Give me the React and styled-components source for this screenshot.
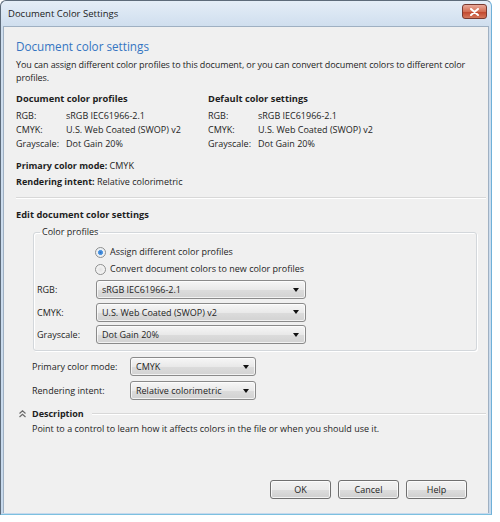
import React, { useState } from "react";
import styled, { createGlobalStyle } from "styled-components";

const GlobalStyle = createGlobalStyle`
    html, body {
        margin: 0;
        padding: 0;
        background: #ffffff;
    }
    body {
        font-family: "Open Sans", "Noto Sans", sans-serif;
        font-size: 9px;
        color: #1e1e1e;
    }
`

const profiles = [
    { label: "RGB:", value: "sRGB IEC61966-2.1" },
    { label: "CMYK:", value: "U.S. Web Coated (SWOP) v2" },
    { label: "Grayscale:", value: "Dot Gain 20%" },
]

const Chevron = () => (
    <svg width="7" height="8" viewBox="0 0 7 8">
        <path d="M0.5 3.5 L3.5 0.8 L6.5 3.5" fill="none" stroke="#6a6a6a" strokeWidth="1.2" />
        <path d="M0.5 7 L3.5 4.3 L6.5 7" fill="none" stroke="#6a6a6a" strokeWidth="1.2" />
    </svg>
)

const Combo = ({ value, width }) => (
    <Select width={width}>
        <span>{value}</span>
        <Arrow />
    </Select>
)

const App = () => {
    const [mode, setMode] = useState("assign")

    return (
        <>
            <GlobalStyle />
            <Window>
                <TitleBar>
                    <Caption>Document Color Settings</Caption>
                    <Close>
                        <svg width="9" height="8" viewBox="0 0 9 8">
                            <path d="M1 1 L8 7 M8 1 L1 7" stroke="#ffffff" strokeWidth="2" strokeLinecap="round" />
                        </svg>
                    </Close>
                </TitleBar>

                <Content>
                    <Heading>Document color settings</Heading>
                    <Intro>
                        You can assign different color profiles to this document, or you can convert document colors to different color profiles.
                    </Intro>

                    <Columns>
                        <Column>
                            <SubTitle>Document color profiles</SubTitle>
                            {profiles.map(p => (
                                <InfoRow key={p.label}>
                                    <InfoLabel>{p.label}</InfoLabel>
                                    <span>{p.value}</span>
                                </InfoRow>
                            ))}
                        </Column>
                        <Column>
                            <SubTitle>Default color settings</SubTitle>
                            {profiles.map(p => (
                                <InfoRow key={p.label}>
                                    <InfoLabel>{p.label}</InfoLabel>
                                    <span>{p.value}</span>
                                </InfoRow>
                            ))}
                        </Column>
                    </Columns>

                    <Summary>
                        <div><b>Primary color mode:</b> CMYK</div>
                        <div><b>Rendering intent:</b> Relative colorimetric</div>
                    </Summary>

                    <Separator />

                    <SubTitle>Edit document color settings</SubTitle>

                    <Group>
                        <Legend>Color profiles</Legend>
                        <Radios>
                            <RadioRow onClick={() => setMode("assign")}>
                                <Radio checked={mode === "assign"} />
                                Assign different color profiles
                            </RadioRow>
                            <RadioRow onClick={() => setMode("convert")}>
                                <Radio checked={mode === "convert"} />
                                Convert document colors to new color profiles
                            </RadioRow>
                        </Radios>
                        <Fields>
                            {profiles.map(p => (
                                <FieldRow key={p.label}>
                                    <FieldLabel>{p.label}</FieldLabel>
                                    <Combo value={p.value} width={210} />
                                </FieldRow>
                            ))}
                        </Fields>
                    </Group>

                    <Options>
                        <OptionRow>
                            <OptionLabel>Primary color mode:</OptionLabel>
                            <Combo value="CMYK" width={126} />
                        </OptionRow>
                        <OptionRow>
                            <OptionLabel>Rendering intent:</OptionLabel>
                            <Combo value="Relative colorimetric" width={126} />
                        </OptionRow>
                    </Options>

                    <DescHeader>
                        <Chevron />
                        <b>Description</b>
                        <Rule />
                    </DescHeader>
                    <DescText>Point to a control to learn how it affects colors in the file or when you should use it.</DescText>

                    <Buttons>
                        <Button>OK</Button>
                        <Button>Cancel</Button>
                        <Button>Help</Button>
                    </Buttons>
                </Content>
            </Window>
        </>
    )
}

const Window = styled.div`
    box-sizing: border-box;
    width: 492px;
    height: 515px;
    display: flex;
    flex-direction: column;
    border: 1px solid #5d6b7a;
    border-right-color: #6fb0d8;
    border-bottom-color: #7cc0e0;
    border-radius: 6px 6px 0 0;
    padding: 0 2px 1px 2px;
    background: linear-gradient(#e4edf7, #cfdeee 26px, #c7d9ec);
`
const TitleBar = styled.div`
    height: 25px;
    display: flex;
    align-items: center;
    justify-content: space-between;
    padding-left: 5px;
    padding-right: 2px;
`
const Caption = styled.div`
    font-size: 9.5px;
    color: #1b1b1b;
`
const Close = styled.div`
    width: 25px;
    height: 15px;
    margin-top: -4px;
    display: flex;
    align-items: center;
    justify-content: center;
    border: 1px solid #7a3a30;
    border-radius: 3px;
    background: linear-gradient(#e9a99a, #d46f55 50%, #c0442b 51%, #d5785c);
    box-sizing: border-box;
`
const Content = styled.div`
    flex: 1;
    display: flex;
    flex-direction: column;
    background: #f0f0f0;
    border: 1px solid #9fb0c2;
    border-bottom: none;
    padding: 10px 12px 14px 12px;
`
const Heading = styled.div`
    font-size: 11.7px;
    line-height: 18px;
    color: #3575c2;
`
const Intro = styled.div`
    margin-top: 4px;
    line-height: 12.5px;
    letter-spacing: -0.1px;
    margin-right: -6px;
`
const Columns = styled.div`
    display: flex;
    margin-top: 8px;
`
const Column = styled.div`
    width: 192px;
`
const SubTitle = styled.div`
    font-weight: 700;
    font-size: 9.3px;
    line-height: 14px;
    margin-bottom: 3px;
`
const InfoRow = styled.div`
    display: flex;
    line-height: 14px;
`
const InfoLabel = styled.span`
    width: 50px;
`
const Summary = styled.div`
    margin-top: 7px;
    line-height: 15px;
    display: flex;
    flex-direction: column;
    gap: 1px;
`
const Separator = styled.div`
    height: 1px;
    background: #d8d8d8;
    border-bottom: 1px solid #ffffff;
    margin: 8px -10px 9px 0;
`
const Group = styled.fieldset`
    margin: 1px 0 0 17px;
    width: 444px;
    box-sizing: border-box;
    border: 1px solid #d3d7db;
    border-radius: 3px;
    box-shadow: inset 1px 1px 0 #ffffff, 1px 1px 0 #ffffff;
    padding: 8px 0 6px 3px;
`
const Legend = styled.legend`
    padding: 0 2px;
    margin-left: 3px;
    line-height: 12px;
`
const Radios = styled.div`
    display: flex;
    flex-direction: column;
    padding-left: 58px;
    gap: 5px;
`
const RadioRow = styled.label`
    display: flex;
    align-items: center;
    gap: 4px;
    line-height: 12px;
    cursor: default;
`
const Radio = styled.span`
    width: 9px;
    height: 9px;
    border-radius: 50%;
    border: 1px solid #8e8f8f;
    background: ${props => props.checked
        ? "radial-gradient(circle, #2e6fc4 0, #5aa0e6 2.3px, #e8eef4 2.6px, #f4f4f4 100%)"
        : "radial-gradient(circle, #e3e3e3 0, #fdfdfd 100%)"};
`
const Fields = styled.div`
    margin-top: 5px;
    display: flex;
    flex-direction: column;
    gap: 3.5px;
`
const FieldRow = styled.div`
    display: flex;
    align-items: center;
`
const FieldLabel = styled.span`
    width: 59px;
`
const Select = styled.div`
    box-sizing: border-box;
    width: ${props => props.width}px;
    height: 19px;
    display: flex;
    align-items: center;
    justify-content: space-between;
    padding: 0 6px 0 5px;
    border: 1px solid #8a8a8a;
    border-radius: 3px;
    background: linear-gradient(#f6f6f6, #e9e9e9 50%, #dcdcdc 51%, #d2d2d2);
    box-shadow: inset 0 0 0 1px rgba(255, 255, 255, 0.7);
`
const Arrow = styled.span`
    width: 0;
    height: 0;
    border-left: 3.5px solid transparent;
    border-right: 3.5px solid transparent;
    border-top: 4px solid #111111;
`
const Options = styled.div`
    margin: 6px 0 0 16px;
    display: flex;
    flex-direction: column;
    gap: 5px;
`
const OptionRow = styled.div`
    display: flex;
    align-items: center;
`
const OptionLabel = styled.span`
    width: 98px;
`
const DescHeader = styled.div`
    margin-top: 7px;
    display: flex;
    align-items: center;
    gap: 6px;
    padding-left: 3px;
    line-height: 14px;
    margin-right: -10px;
`
const Rule = styled.div`
    flex: 1;
    height: 1px;
    background: #d8d8d8;
    border-bottom: 1px solid #ffffff;
    margin-left: 2px;
`
const DescText = styled.div`
    margin: 1px 0 0 16px;
    line-height: 14px;
`
const Buttons = styled.div`
    margin-top: auto;
    display: flex;
    justify-content: flex-end;
    gap: 7px;
    padding-right: 9px;
`
const Button = styled.button`
    width: 61px;
    height: 19px;
    font-family: inherit;
    font-size: 9px;
    color: #1e1e1e;
    border: 1px solid #707070;
    border-radius: 3px;
    background: linear-gradient(#f2f2f2, #ebebeb 50%, #dddddd 51%, #cfcfcf);
    box-shadow: inset 0 0 0 1px rgba(255, 255, 255, 0.75);
    padding: 0;
`

export default App;
